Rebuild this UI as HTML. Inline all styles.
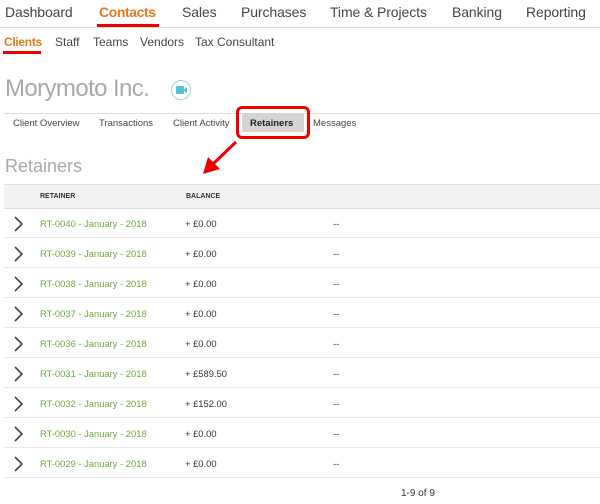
<!DOCTYPE html>
<html><head><style>
*{margin:0;padding:0;box-sizing:border-box}
body{width:600px;height:504px;background:#fff;font-family:"Liberation Sans",sans-serif;position:relative;overflow:hidden;color:#333}
.a{position:absolute;white-space:nowrap}
.nav{font-size:14px;color:#444;top:4px;letter-spacing:-0.1px}
.sub{font-size:12px;color:#444;top:35px}
.tab{font-size:9.5px;color:#444;top:118px}
.row{position:absolute;left:4px;width:596px;height:30px;border-bottom:1px solid #e6e6e6}
.row svg{position:absolute;left:9px;top:8px}
.row .n{position:absolute;left:36px;top:10px;font-size:9.4px;color:#6aab3e}
.row .b{position:absolute;left:181px;top:10px;font-size:9.4px;color:#333}
.row .d{position:absolute;left:329px;top:10px;font-size:9.4px;color:#333}
</style></head><body>
<div class="a nav" style="left:5px">Dashboard</div>
<div class="a nav" style="left:99px;color:#e07b1c;font-weight:bold;letter-spacing:-0.4px">Contacts</div>
<div style="position:absolute;left:97px;top:24px;width:62px;height:3px;background:#e00"></div>
<div class="a nav" style="left:182px">Sales</div>
<div class="a nav" style="left:241px">Purchases</div>
<div class="a nav" style="left:330px">Time &amp; Projects</div>
<div class="a nav" style="left:452px">Banking</div>
<div class="a nav" style="left:526px">Reporting</div>
<div style="position:absolute;left:0;top:27px;width:600px;height:1px;background:#ddd"></div>
<div class="a sub" style="left:4px;color:#e07b1c;font-weight:bold;letter-spacing:-0.3px">Clients</div>
<div style="position:absolute;left:3px;top:51px;width:38px;height:3px;background:#e00"></div>
<div class="a sub" style="left:55px">Staff</div>
<div class="a sub" style="left:93px">Teams</div>
<div class="a sub" style="left:140px">Vendors</div>
<div class="a sub" style="left:195px">Tax Consultant</div>
<div class="a" style="left:5px;top:75px;font-size:24px;color:#aaa;letter-spacing:-0.6px">Morymoto Inc.</div>
<div style="position:absolute;left:171px;top:80px;width:20px;height:20px;border-radius:50%;border:1.5px solid #9ad4dc"></div>
<div style="position:absolute;left:176px;top:86px;width:8px;height:8px;background:#5bc0ce;border-radius:1px"></div>
<div style="position:absolute;left:183px;top:87px;width:0;height:0;border-top:3px solid transparent;border-bottom:3px solid transparent;border-right:4px solid #5bc0ce"></div>
<div style="position:absolute;left:4px;top:113px;width:596px;height:1px;background:#ddd"></div>
<div class="a tab" style="left:13px">Client Overview</div>
<div class="a tab" style="left:99px">Transactions</div>
<div class="a tab" style="left:173px">Client Activity</div>
<div style="position:absolute;left:236px;top:106px;width:74px;height:33px;border:3px solid #e00;border-radius:6px"></div>
<div style="position:absolute;left:242px;top:113px;width:62px;height:19px;background:#d4d4d4"></div>
<div class="a tab" style="left:250px;font-weight:bold;color:#222">Retainers</div>
<div class="a tab" style="left:313px">Messages</div>
<svg style="position:absolute;left:200px;top:138px" width="45" height="45"><line x1="36" y1="4" x2="12" y2="27" stroke="#e00" stroke-width="3"/><polygon points="3,36 8,19 20,31" fill="#e00"/></svg>
<div class="a" style="left:5px;top:156px;font-size:18px;color:#aaa">Retainers</div>
<div style="position:absolute;left:4px;top:184px;width:596px;height:25px;background:#f2f2f2;border-top:1px solid #ddd;border-bottom:1px solid #ddd"></div>
<div class="a" style="left:40px;top:193px;font-size:7px;font-weight:bold;color:#333">RETAINER</div>
<div class="a" style="left:186px;top:193px;font-size:7px;font-weight:bold;color:#333">BALANCE</div>
<div class="row" style="top:208px"><svg width="12" height="16"><path d="M2 1 L9 8 L2 15" fill="none" stroke="#444" stroke-width="1.6"/></svg><div class="n">RT-0040 - January - 2018</div><div class="b">+ £0.00</div><div class="d">--</div></div>
<div class="row" style="top:238px"><svg width="12" height="16"><path d="M2 1 L9 8 L2 15" fill="none" stroke="#444" stroke-width="1.6"/></svg><div class="n">RT-0039 - January - 2018</div><div class="b">+ £0.00</div><div class="d">--</div></div>
<div class="row" style="top:268px"><svg width="12" height="16"><path d="M2 1 L9 8 L2 15" fill="none" stroke="#444" stroke-width="1.6"/></svg><div class="n">RT-0038 - January - 2018</div><div class="b">+ £0.00</div><div class="d">--</div></div>
<div class="row" style="top:298px"><svg width="12" height="16"><path d="M2 1 L9 8 L2 15" fill="none" stroke="#444" stroke-width="1.6"/></svg><div class="n">RT-0037 - January - 2018</div><div class="b">+ £0.00</div><div class="d">--</div></div>
<div class="row" style="top:328px"><svg width="12" height="16"><path d="M2 1 L9 8 L2 15" fill="none" stroke="#444" stroke-width="1.6"/></svg><div class="n">RT-0036 - January - 2018</div><div class="b">+ £0.00</div><div class="d">--</div></div>
<div class="row" style="top:358px"><svg width="12" height="16"><path d="M2 1 L9 8 L2 15" fill="none" stroke="#444" stroke-width="1.6"/></svg><div class="n">RT-0031 - January - 2018</div><div class="b">+ £589.50</div><div class="d">--</div></div>
<div class="row" style="top:388px"><svg width="12" height="16"><path d="M2 1 L9 8 L2 15" fill="none" stroke="#444" stroke-width="1.6"/></svg><div class="n">RT-0032 - January - 2018</div><div class="b">+ £152.00</div><div class="d">--</div></div>
<div class="row" style="top:418px"><svg width="12" height="16"><path d="M2 1 L9 8 L2 15" fill="none" stroke="#444" stroke-width="1.6"/></svg><div class="n">RT-0030 - January - 2018</div><div class="b">+ £0.00</div><div class="d">--</div></div>
<div class="row" style="top:448px"><svg width="12" height="16"><path d="M2 1 L9 8 L2 15" fill="none" stroke="#444" stroke-width="1.6"/></svg><div class="n">RT-0029 - January - 2018</div><div class="b">+ £0.00</div><div class="d">--</div></div>
<div class="a" style="left:401px;top:488px;font-size:10px;color:#333">1-9 of 9</div>
</body></html>
